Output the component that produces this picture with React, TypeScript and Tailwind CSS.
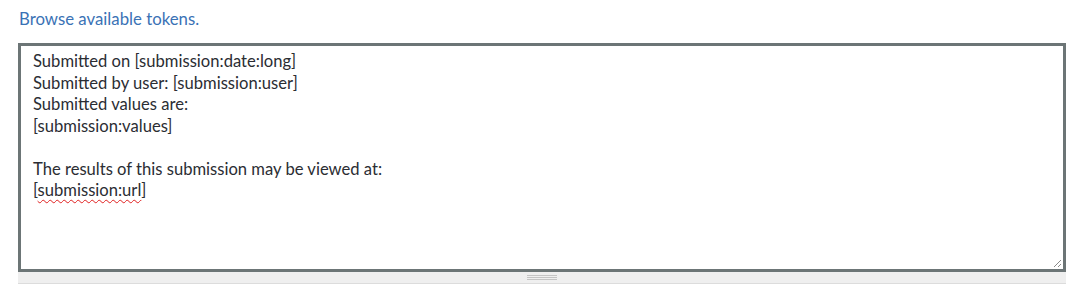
import React from 'react'

const LINES = [
  'Submitted on [submission:date:long]',
  'Submitted by user: [submission:user]',
  'Submitted values are:',
  '[submission:values]',
  '',
  'The results of this submission may be viewed at:',
]

export default function App() {
  return (
    <div className="w-[1080px] h-[301px] bg-white pt-[8px] pl-[18px]" style={{ fontFamily: 'Lato, "Open Sans", sans-serif' }}>
      <a href="#" className="block pl-px text-[16.8px] leading-[21px] text-[#3a72b5]">
        Browse available tokens.
      </a>
      <div className="mt-[14px] w-[1048px]">
        <div className="relative h-[229px] border-[3px] border-[#6c7576] bg-white pl-[12px] pt-[5px] text-[16.6px] leading-[21.5px] text-[#2b2d33]">
          {LINES.map((l, i) => (
            <div key={i} className="h-[21.5px] whitespace-pre">{l}</div>
          ))}
          <div className="h-[21.5px]">
            [<span className="underline decoration-wavy decoration-[#e02020] decoration-1 underline-offset-[3px]">submission:url</span>]
          </div>
          <svg className="absolute right-[1px] bottom-[1px] w-[10px] h-[10px]" viewBox="0 0 10 10">
            <path d="M9 2 L2 9 M9 6 L6 9" stroke="#8a8a8a" strokeWidth="1" />
          </svg>
        </div>
        <div className="flex h-[12px] items-center justify-center border-b border-[#dcdcdc] bg-[#efefef]">
          <div className="flex h-[5px] w-[30px] flex-col justify-between">
            <div className="h-px bg-[#c4c4c4]" />
            <div className="h-px bg-[#c4c4c4]" />
            <div className="h-px bg-[#c4c4c4]" />
          </div>
        </div>
      </div>
    </div>
  )
}
